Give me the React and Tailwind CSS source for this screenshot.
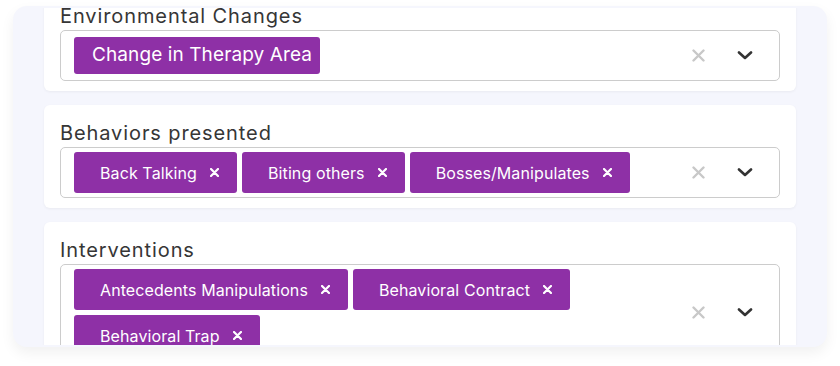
import React, { useLayoutEffect, useRef } from "react";

const fields = [
  {
    label: "Environmental Changes",
    single: true,
    values: ["Change in Therapy Area"],
  },
  {
    label: "Behaviors presented",
    values: ["Back Talking", "Biting others", "Bosses/Manipulates"],
  },
  {
    label: "Interventions",
    values: ["Antecedents Manipulations", "Behavioral Contract", "Behavioral Trap"],
  },
];

function ClearIcon() {
  return (
    <svg width="13" height="13" viewBox="0 0 13 13" fill="none">
      <path d="M1.5 1.5L11.5 11.5M11.5 1.5L1.5 11.5" stroke="#c8c8c8" strokeWidth="2.4" strokeLinecap="round" />
    </svg>
  );
}

function ChevronIcon() {
  return (
    <svg width="16" height="9" viewBox="0 0 16 9" fill="none">
      <path d="M2 1.5L8 7L14 1.5" stroke="#333333" strokeWidth="2.6" strokeLinecap="round" strokeLinejoin="round" />
    </svg>
  );
}

function SmallX() {
  return (
    <svg width="9" height="9" viewBox="0 0 9 9" fill="none">
      <path d="M1 1L8 8M8 1L1 8" stroke="#ffffff" strokeWidth="2.2" strokeLinecap="round" />
    </svg>
  );
}

function Chip({ text, single }) {
  if (single) {
    return (
      <div className="h-[37px] flex items-center pl-[18px] pr-[8px] rounded-[3px] bg-[#8e30a6] text-white text-[19px] tracking-[0.1px]">
        {text}
      </div>
    );
  }
  return (
    <div className="h-[41px] flex items-center pl-[26px] pr-[18px] gap-[13px] rounded-[3px] bg-[#8e30a6] text-white text-[16px] tracking-[0.1px]">
      <span>{text}</span>
      <SmallX />
    </div>
  );
}

function SelectField({ label, values, single }) {
  return (
    <div className="bg-white rounded-[6px] pt-[14px] pb-[10px] px-[16px] shadow-[0_1px_3px_rgba(0,0,0,0.05)]">
      <div className="text-[20px] leading-[28px] text-[#363636] tracking-[0.9px]">{label}</div>
      <div className="min-h-[51px] flex border border-[#cccccc] rounded-[5px]">
        <div className="flex-1 flex flex-wrap items-center gap-[5px] py-[4px] pl-[13px]">
          {values.map((v) => (
            <Chip key={v} text={v} single={single} />
          ))}
        </div>
        <div className="flex items-center pr-[26px]">
          <ClearIcon />
          <div className="w-[32px]" />
          <ChevronIcon />
        </div>
      </div>
    </div>
  );
}

export default function App() {
  const scroller = useRef(null);

  useLayoutEffect(() => {
    if (scroller.current) scroller.current.scrollTop = 20;
  }, []);

  return (
    <div className="w-[840px] h-[366px] bg-white pt-[6px] px-[13px]" style={{ fontFamily: "Inter, 'Noto Sans', sans-serif" }}>
      <div className="rounded-[14px] bg-[#f5f6fd] py-[2px] shadow-[0_6px_14px_rgba(0,0,0,0.06)]">
        <div ref={scroller} className="h-[337px] overflow-hidden px-[31px]">
          <div className="flex flex-col gap-[14px] pb-[20px]">
            {fields.map((f) => (
              <SelectField key={f.label} {...f} />
            ))}
          </div>
        </div>
      </div>
    </div>
  );
}
